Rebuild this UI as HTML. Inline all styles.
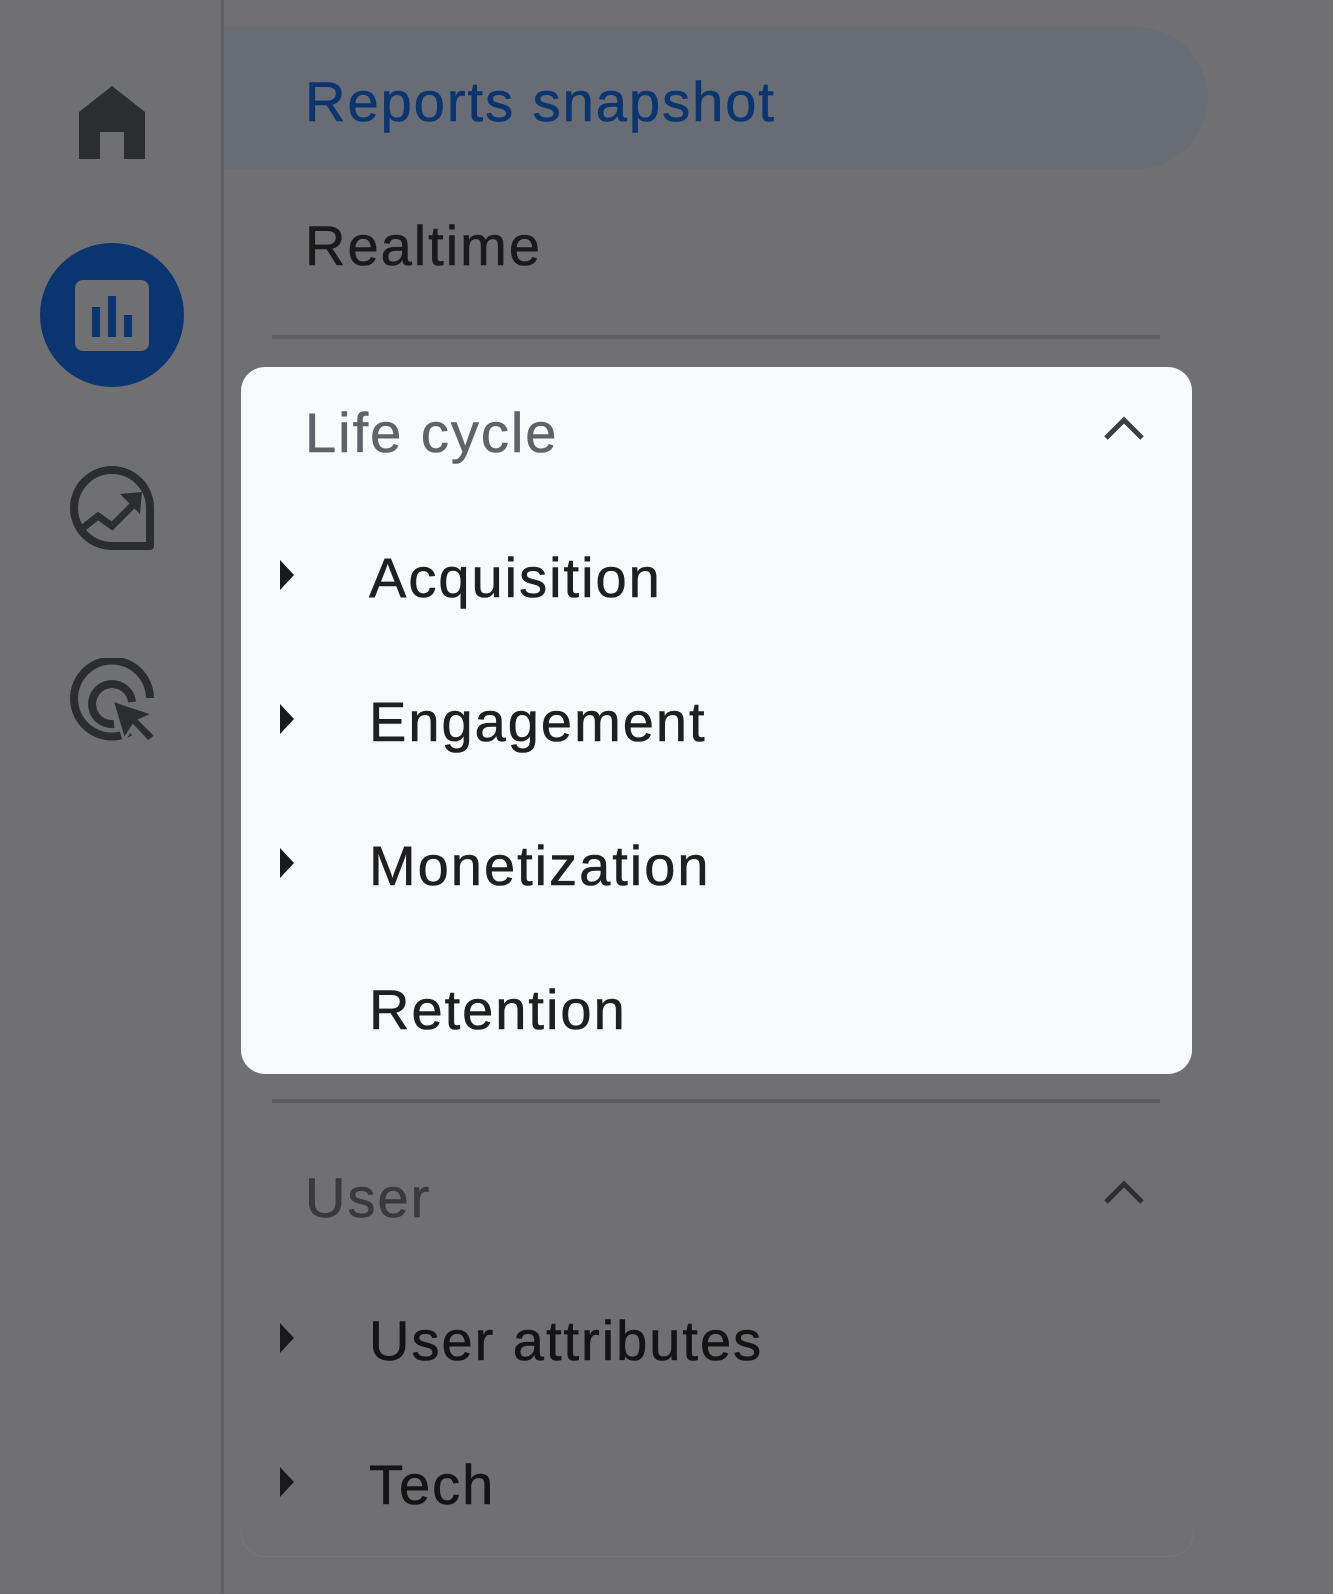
<!DOCTYPE html>
<html><head><style>
body{margin:0;width:1333px;height:1594px;background:#707072;position:relative;overflow:hidden;font-family:"Liberation Sans",sans-serif}
.t{position:absolute;white-space:nowrap;font-size:56px;line-height:1;letter-spacing:2px;-webkit-text-stroke:0.6px currentColor}
.tri{position:absolute;width:0;height:0;border-top:15px solid transparent;border-bottom:15px solid transparent;border-left:14px solid #1a1a1a}
.line{position:absolute;left:272px;width:888px;height:4px;background:#5f5f61}
</style></head><body>
<div style="position:absolute;left:221px;top:0;width:3px;height:1594px;background:#606062"></div>
<div style="position:absolute;left:224px;top:27px;width:984px;height:142px;border-radius:0 71px 71px 0;background:#686c74"></div>
<div class="t" style="left:305px;top:74px;color:#0b3570">Reports snapshot</div>
<div class="t" style="left:305px;top:218px;color:#1a1a1a">Realtime</div>
<div class="line" style="top:335px"></div>
<div style="position:absolute;left:241px;top:367px;width:951px;height:707px;border-radius:24px;background:#f8f9fb"></div>
<div class="t" style="left:305px;top:405px;color:#5f6368">Life cycle</div>
<svg style="position:absolute;left:1102px;top:414px" width="44" height="30"><path d="M4 24 L22 6 L40 24" fill="none" stroke="#3c4043" stroke-width="5"/></svg>
<div class="tri" style="left:280px;top:560px"></div>
<div class="t" style="left:369px;top:550px;color:#1f1f1f">Acquisition</div>
<div class="tri" style="left:280px;top:704px"></div>
<div class="t" style="left:369px;top:694px;color:#1f1f1f">Engagement</div>
<div class="tri" style="left:280px;top:848px"></div>
<div class="t" style="left:369px;top:838px;color:#1f1f1f">Monetization</div>
<div class="t" style="left:369px;top:982px;color:#1f1f1f">Retention</div>
<div class="line" style="top:1099px"></div>
<div class="t" style="left:305px;top:1170px;color:#3a3a3c">User</div>
<svg style="position:absolute;left:1102px;top:1178px" width="44" height="30"><path d="M4 24 L22 6 L40 24" fill="none" stroke="#2f2f31" stroke-width="5"/></svg>
<div class="tri" style="left:280px;top:1323px"></div>
<div class="t" style="left:369px;top:1313px;color:#141414">User attributes</div>
<div class="tri" style="left:280px;top:1467px"></div>
<div class="t" style="left:369px;top:1457px;color:#141414">Tech</div>
<div style="position:absolute;left:241px;top:1530px;width:951px;height:26px;border:1px solid #858587;border-top:none;border-radius:0 0 24px 24px;opacity:.35"></div>
<svg style="position:absolute;left:79px;top:86px" width="66" height="74"><path d="M0 26 L33 0 L66 26 L66 73 L45 73 L45 46 L21 46 L21 73 L0 73 Z" fill="#2c2d30"/></svg>
<div style="position:absolute;left:40px;top:243px;width:144px;height:144px;border-radius:50%;background:#0b3570"></div>
<div style="position:absolute;left:75px;top:280px;width:74px;height:71px;border-radius:8px;background:#707072"></div>
<div style="position:absolute;left:92px;top:307px;width:8px;height:30px;background:#0b3570"></div>
<div style="position:absolute;left:108px;top:296px;width:8px;height:41px;background:#0b3570"></div>
<div style="position:absolute;left:124px;top:315px;width:8px;height:22px;background:#0b3570"></div>
<svg style="position:absolute;left:70px;top:466px" width="84" height="84"><path d="M80 80 L42 80 A38 38 0 1 1 80 42 Z" fill="none" stroke="#2c2d30" stroke-width="8" stroke-linejoin="round"/><path d="M8 66 L28 50 L42 60 L66 36" fill="none" stroke="#2c2d30" stroke-width="7"/><path d="M50 28 L72 26 L70 48 Z" fill="#2c2d30"/><circle cx="72" cy="72" r="3" fill="#707072"/></svg>
<svg style="position:absolute;left:70px;top:658px" width="90" height="84"><path d="M60 74 A38 38 0 1 1 80 40" fill="none" stroke="#2c2d30" stroke-width="8"/><path d="M44 66 A20 20 0 1 1 62 44" fill="none" stroke="#2c2d30" stroke-width="8"/><path d="M42 42 L84 56 L70 62 L86 78 L78 84 L63 68 L54 82 Z" fill="#2c2d30" stroke="#707072" stroke-width="3"/></svg>
</body></html>
